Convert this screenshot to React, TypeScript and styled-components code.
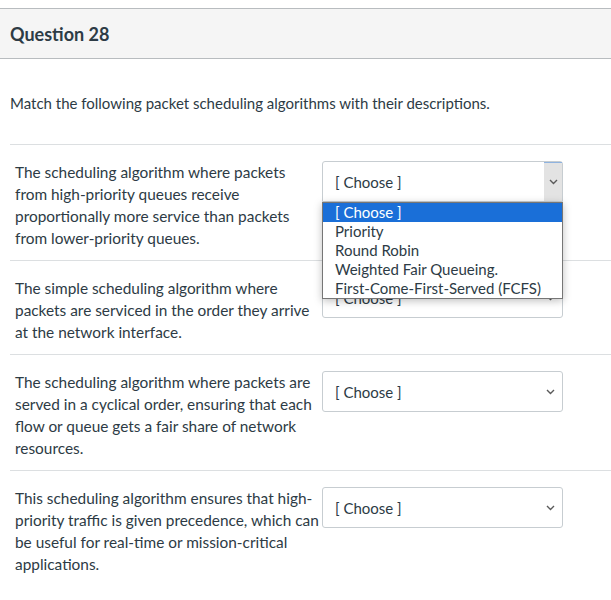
import React from "react";
import styled, { createGlobalStyle } from "styled-components";

const GlobalStyle = createGlobalStyle`
  body {
    margin: 0;
    background: #ffffff;
    font-family: Lato, "Noto Sans", sans-serif;
    color: #2d3b45;
  }
`;

const Page = styled.div`
  width: 611px;
  padding-top: 8px;
`;

const Header = styled.div`
  height: 49px;
  display: flex;
  align-items: center;
  padding: 0 10px;
  background: #f5f5f5;
  border-top: 1px solid #b8bcbf;
  border-bottom: 1px solid #b8bcbf;
`;

const Title = styled.h2`
  margin: 0;
  font-size: 18px;
  font-weight: 700;
  color: #2d3b45;
`;

const Body = styled.div`
  padding-left: 10px;
`;

const Prompt = styled.p`
  margin: 32px 0 29px;
  font-size: 15px;
  line-height: 24px;
`;

const Row = styled.div`
  position: relative;
  display: flex;
  align-items: flex-start;
  border-top: 1px solid #dcdfe1;
  padding: 16px 0 11px 5px;
`;

const Label = styled.div`
  width: 306px;
  font-size: 15.4px;
  line-height: 22px;
`;

const SelectBox = styled.div<{ $open?: boolean }>`
  position: relative;
  width: 241px;
  height: 41px;
  box-sizing: border-box;
  margin-left: 1px;
  flex-shrink: 0;
  display: flex;
  align-items: center;
  padding-left: 12px;
  border: 1px solid #c7cdd1;
  border-radius: ${(p) => (p.$open ? "3px 3px 0 0" : "3px")};
  background: #fff;
  font-size: 15px;
  color: #2d3b45;
`;

const Arrow = styled.div<{ $open?: boolean }>`
  position: absolute;
  top: 0;
  right: 0;
  bottom: 0;
  width: 18px;
  display: flex;
  align-items: center;
  justify-content: center;
  background: ${(p) => (p.$open ? "#e3e3e3" : "transparent")};
  border-top: ${(p) => (p.$open ? "1px solid #8fb3e0" : "none")};
  margin-right: ${(p) => (p.$open ? "0" : "3px")};
`;

const OptionList = styled.div`
  position: absolute;
  top: 40px;
  left: -1px;
  width: 241px;
  box-sizing: border-box;
  border: 1px solid #767676;
  background: #fff;
  box-shadow: 0 2px 8px rgba(0, 0, 0, 0.25);
  z-index: 5;
`;

const Option = styled.div<{ $active?: boolean }>`
  height: 19px;
  line-height: 19px;
  padding-left: 12px;
  font-size: 15px;
  color: ${(p) => (p.$active ? "#ffffff" : "#2d3b45")};
  background: ${(p) => (p.$active ? "#1a6fd8" : "transparent")};
  white-space: nowrap;
`;

const Chevron = () => (
  <svg width="9" height="6" viewBox="0 0 9 6">
    <path d="M1 1l3.5 3.5L8 1" fill="none" stroke="#5a5a5a" strokeWidth="1.4" />
  </svg>
);

const options = [
  "[ Choose ]",
  "Priority",
  "Round Robin",
  "Weighted Fair Queueing.",
  "First-Come-First-Served (FCFS)",
];

const items = [
  "The scheduling algorithm where packets from high-priority queues receive proportionally more service than packets from lower-priority queues.",
  "The simple scheduling algorithm where packets are serviced in the order they arrive at the network interface.",
  "The scheduling algorithm where packets are served in a cyclical order, ensuring that each flow or queue gets a fair share of network resources.",
  "This scheduling algorithm ensures that high-priority traffic is given precedence, which can be useful for real-time or mission-critical applications.",
];

export default function App() {
  return (
    <Page>
      <GlobalStyle />
      <Header>
        <Title>Question 28</Title>
      </Header>
      <Body>
        <Prompt>
          Match the following packet scheduling algorithms with their descriptions.
        </Prompt>
        {items.map((text, i) => (
          <Row key={i} style={{ zIndex: i === 0 ? 2 : 1 }}>
            <Label>{text}</Label>
            <SelectBox $open={i === 0}>
              [ Choose ]
              <Arrow $open={i === 0}>
                <Chevron />
              </Arrow>
              {i === 0 && (
                <OptionList>
                  {options.map((o, j) => (
                    <Option key={o} $active={j === 0}>
                      {o}
                    </Option>
                  ))}
                </OptionList>
              )}
            </SelectBox>
          </Row>
        ))}
      </Body>
    </Page>
  );
}
